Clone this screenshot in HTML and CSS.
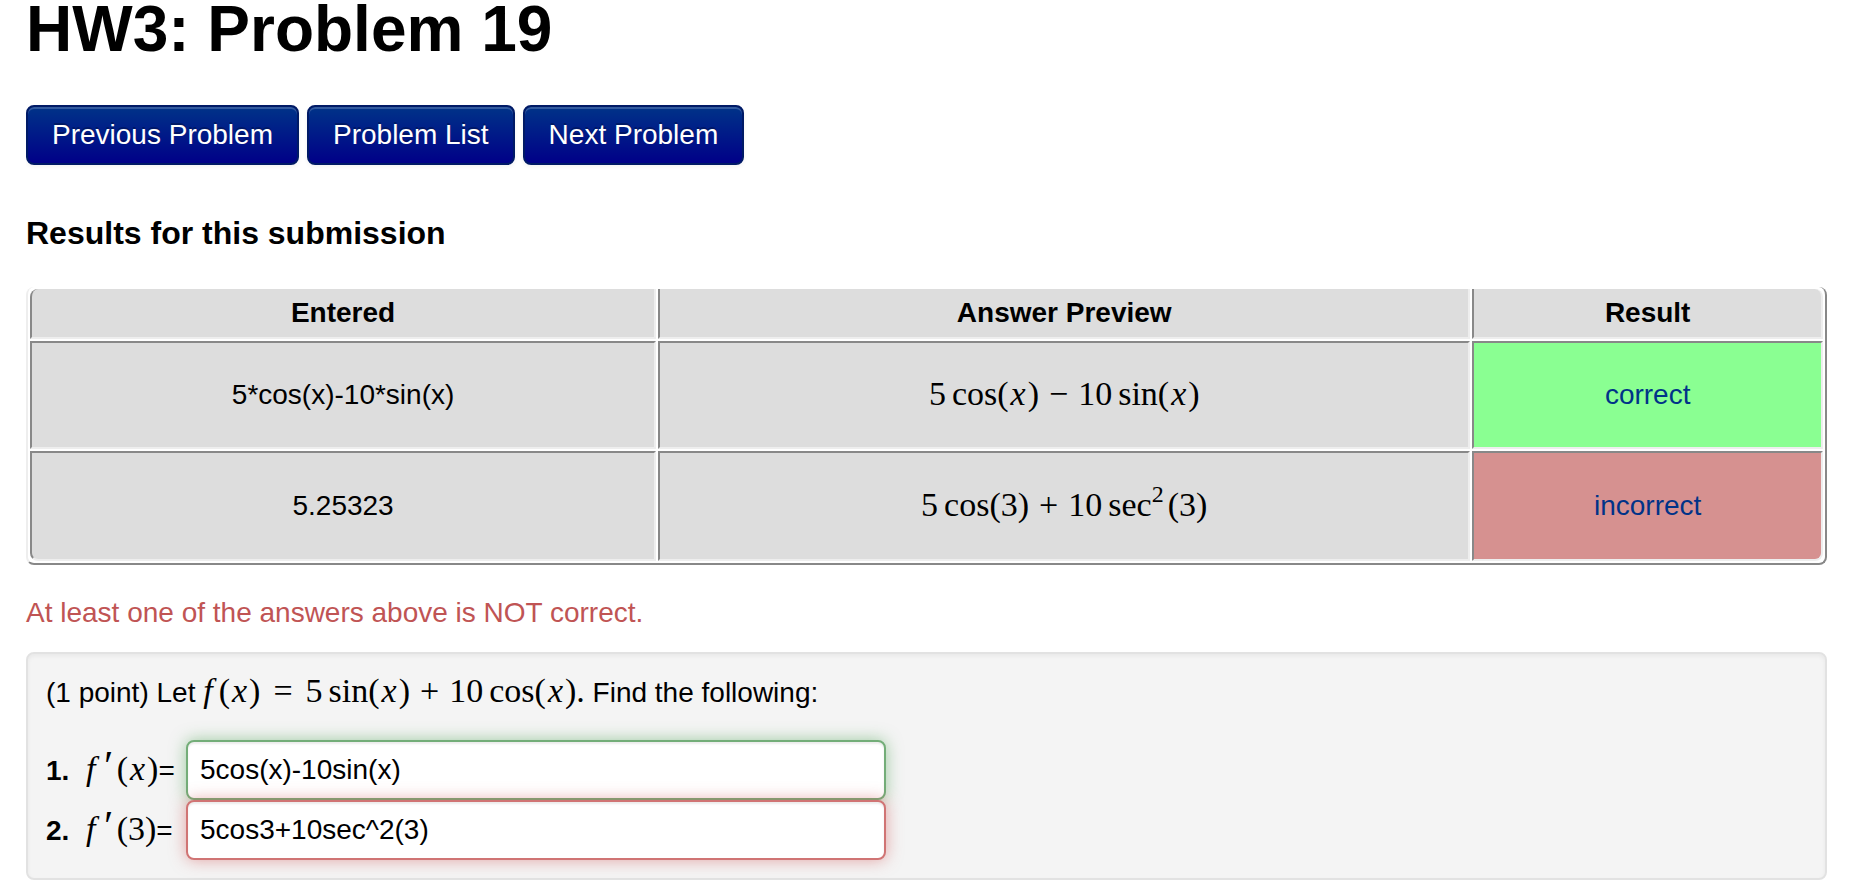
FILE: index.html
```html
<!DOCTYPE html>
<html lang="en">
<head>
    <meta charset="UTF-8">
    <meta name="viewport" content="width=device-width, initial-scale=1.0">
    <title>HW3: Problem 19</title>
    <link rel="stylesheet" href="styles.css">
</head>
<body>
    <h1>HW3: Problem 19</h1>
    <div class="nav-buttons">
        <button type="button" class="btn">Previous Problem</button>
        <button type="button" class="btn">Problem List</button>
        <button type="button" class="btn">Next Problem</button>
    </div>

    <h3>Results for this submission</h3>
    <table class="results">
        <thead>
            <tr>
                <th class="col-entered">Entered</th>
                <th class="col-preview">Answer Preview</th>
                <th>Result</th>
            </tr>
        </thead>
        <tbody>
            <tr>
                <td>5*cos(x)-10*sin(x)</td>
                <td><span class="math">5<span class="fn">cos</span>(<i>x</i>)<span class="op">−</span>10<span class="fn">sin</span>(<i>x</i>)</span></td>
                <td class="correct"><a href="#answer1">correct</a></td>
            </tr>
            <tr>
                <td>5.25323</td>
                <td><span class="math">5<span class="fn">cos</span>(3)<span class="op">+</span>10<span class="fn">sec</span><sup>2</sup>(3)</span></td>
                <td class="incorrect"><a href="#answer2">incorrect</a></td>
            </tr>
        </tbody>
    </table>
    <p class="message">At least one of the answers above is NOT correct.</p>

    <form class="problem">
        <p>(1 point) Let <span class="math"><i class="f">f</i>(<i>x</i>)<span class="op eq">=</span>5<span class="fn">sin</span>(<i>x</i>)<span class="op">+</span>10<span class="fn">cos</span>(<i>x</i>).</span> Find the following:</p>
        <div class="answer">
            <label for="answer1"><b>1.</b><span class="math"><i class="f">f</i><i class="prime">′</i>(<i>x</i>)</span>=</label>
            <input type="text" id="answer1" class="is-correct" value="5cos(x)-10sin(x)">
        </div>
        <div class="answer">
            <label for="answer2"><b>2.</b><span class="math"><i class="f">f</i><i class="prime">′</i>(3)</span>=</label>
            <input type="text" id="answer2" class="is-incorrect" value="5cos3+10sec^2(3)">
        </div>
    </form>
</body>
</html>
```

FILE: styles.css
```css
body {
    font-family: "Liberation Sans", Arial, sans-serif;
    font-size: 28px;
    line-height: 40px;
    color: #000;
    background-color: #fff;
    margin: 0 37px 0 26px;
}
h1 {
    font-size: 64px;
    line-height: 58px;
    margin: 0 0 47px;
}
h3 {
    font-size: 32px;
    line-height: 40px;
    margin: 48px 0 34px;
}
.nav-buttons {
    display: flex;
    gap: 8px;
}
.btn {
    height: 60px;
    padding: 0 24px;
    font: inherit;
    color: #fff;
    text-shadow: 0 -2px 0 rgba(0, 0, 0, 0.25);
    background: linear-gradient(#003388, #000088);
    border: 2px solid #001a66;
    border-radius: 8px;
    box-shadow: inset 0 2px 0 rgba(255, 255, 255, 0.2), 0 2px 4px rgba(0, 0, 0, 0.05);
    cursor: pointer;
}
.results {
    width: 100%;
    table-layout: fixed;
    border: 2px solid;
    border-color: #eee #888 #888 #eee;
    border-top: none;
    border-radius: 8px;
    border-spacing: 2px;
}
.results th,
.results td {
    box-sizing: border-box;
    padding: 0;
    text-align: center;
    background-color: #ddd;
    border: 2px solid;
    border-color: #888 #eee #eee #888;
}
.results th {
    height: 50px;
    border-top: none;
}
.results td {
    height: 108px;
}
.results tr:last-child td {
    height: 110px;
}
.results th:first-child {
    border-top-left-radius: 8px;
}
.results th:last-child {
    border-top-right-radius: 8px;
}
.results tr:last-child td:first-child {
    border-bottom-left-radius: 8px;
}
.results tr:last-child td:last-child {
    border-bottom-right-radius: 8px;
}
.col-entered {
    width: 35%;
}
.col-preview {
    width: 45.4%;
}
.results .correct {
    background-color: #8aff92;
}
.results .incorrect {
    background-color: #d69190;
}
a {
    color: #003388;
    text-decoration: none;
}
.message {
    margin: 28px 0 19px;
    color: #c05454;
}
.problem {
    padding: 17px 18px 18px;
    background-color: #f4f4f4;
    border: 2px solid #e2e2e2;
    border-radius: 8px;
    box-shadow: inset 0 2px 4px rgba(0, 0, 0, 0.05);
}
.problem p {
    margin: 0 0 27px;
}
.answer {
    display: flex;
    align-items: center;
}
.answer label {
    display: flex;
    align-items: baseline;
    width: 140px;
}
.answer b {
    width: 40px;
}
.answer input {
    box-sizing: border-box;
    width: 700px;
    height: 60px;
    padding: 0 12px;
    font: inherit;
    color: #000;
    background-color: #fff;
    border: 2px solid;
    border-radius: 8px;
}
.answer .is-correct {
    border-color: #73ad78;
    box-shadow: inset 0 2px 2px rgba(0, 0, 0, 0.08), 0 0 16px rgba(70, 160, 75, 0.5);
}
.answer .is-incorrect {
    border-color: #d07474;
    box-shadow: inset 0 2px 2px rgba(0, 0, 0, 0.08), 0 0 16px rgba(210, 80, 80, 0.5);
}
/* typeset formulas */
.math {
    font-family: "Liberation Serif", "Times New Roman", serif;
    font-size: 34px;
}
.math i {
    padding: 0 2px;
}
.math .f {
    padding: 0 6px 0 0;
}
.math .prime {
    padding: 0 6px 0 0;
    font-size: 42px;
    line-height: 0;
}
.math .fn {
    margin-left: 6px;
}
.math .op {
    padding: 0 10px;
}
.math .eq {
    padding: 0 13px;
}
.math sup {
    font-size: 24px;
    line-height: 0;
    vertical-align: 14px;
    padding-right: 4px;
}
```
